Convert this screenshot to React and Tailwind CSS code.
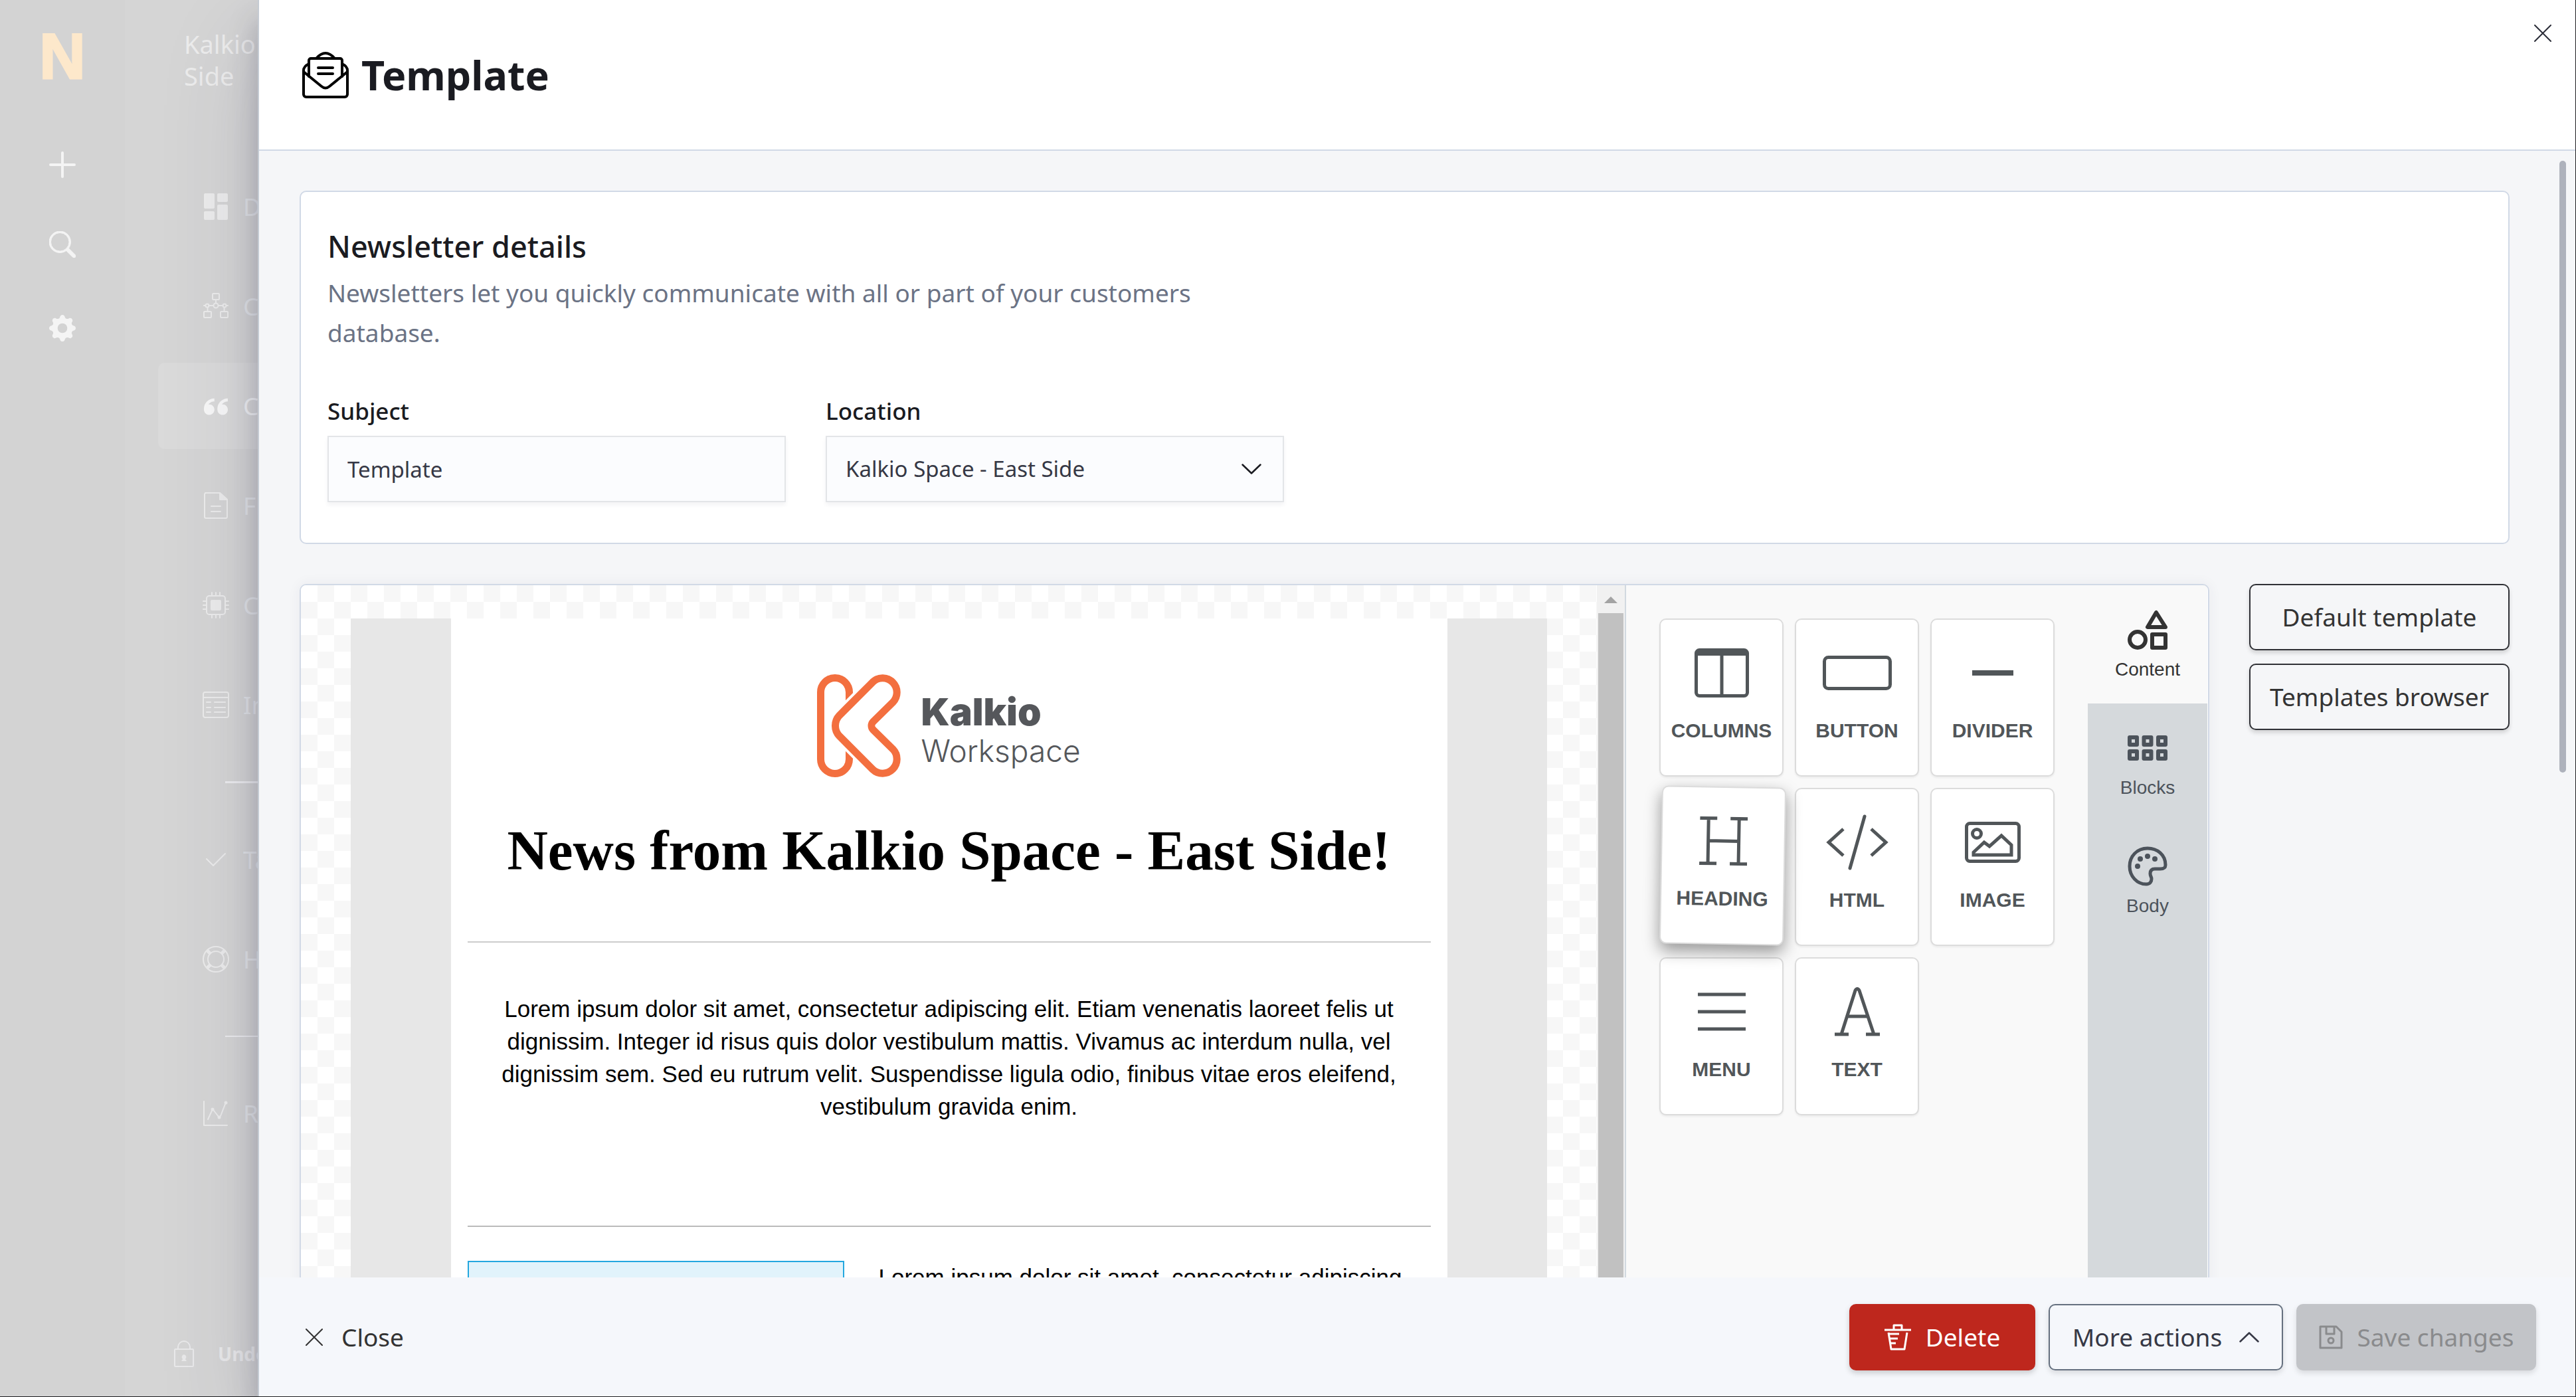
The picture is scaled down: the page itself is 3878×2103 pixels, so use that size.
import { useState } from 'react';
import { BsGearFill, BsSearch } from 'react-icons/bs';
import { ImQuotesLeft } from 'react-icons/im';

const line = { fill: 'none', stroke: 'currentColor', strokeLinecap: 'round', strokeLinejoin: 'round' };

/* Navigation icons, all on a 40px grid */
const navIcons = {
    dashboard: (
        <g fill="currentColor">
            <rect x="2" y="0" width="16" height="23" rx="2" />
            <rect x="2" y="27" width="16" height="13" rx="2" />
            <rect x="22" y="0" width="16" height="13" rx="2" />
            <rect x="22" y="17" width="16" height="23" rx="2" />
        </g>
    ),
    network: (
        <g {...line} strokeWidth="2">
            <rect x="15" y="1" width="10" height="9" rx="1" />
            <path d="M20 10v5M9 19h7M24 19h7M2 19h2M36 19h2M7.500 22v6M32.500 22v6" />
            <circle cx="7" cy="19" r="2.500" />
            <circle cx="20" cy="19" r="3.500" />
            <circle cx="33" cy="19" r="2.500" />
            <rect x="2" y="28" width="11" height="9" rx="1" />
            <rect x="27" y="28" width="11" height="9" rx="1" />
        </g>
    ),
    file: (
        <g {...line} strokeWidth="2">
            <path d="M4 1h22l11 10v26a2 2 0 0 1-2 2H5a2 2 0 0 1-2-2V3z" />
            <path d="M26 1v10h11z" fill="currentColor" />
            <path d="M13 21h14M13 29h14" />
        </g>
    ),
    chip: (
        <g {...line} strokeWidth="2">
            <rect x="6" y="6" width="28" height="28" rx="4" />
            <rect x="13" y="13" width="14" height="14" rx="1" fill="currentColor" />
            <path d="M14 1v4M20 1v4M26 1v4M14 35v4M20 35v4M26 35v4M1 14h4M1 20h4M1 26h4M35 14h4M35 20h4M35 26h4" />
        </g>
    ),
    table: (
        <g {...line} strokeWidth="2">
            <rect x="1" y="1" width="38" height="38" rx="3" />
            <path d="M1 9h38M6 16h6M18 16h16M6 24h6M18 24h16M6 31h6M18 31h16" />
        </g>
    ),
    check: <path {...line} strokeWidth="2" d="M6 19l10 10L34 11" />,
    help: (
        <g {...line} strokeWidth="2">
            <circle cx="20" cy="20" r="19" />
            <circle cx="20" cy="20" r="12" />
            <path strokeWidth="5" strokeLinecap="butt" d="M7 7l5 5M33 7l-5 5M7 33l5-5M33 33l-5-5" />
        </g>
    ),
    chart: (
        <g {...line} strokeWidth="2">
            <path d="M2 2v36h35M8 29l6-13M17 16l7 9M27 24l7-18" />
            <g fill="currentColor" stroke="none">
                <circle cx="15" cy="14" r="2.500" />
                <circle cx="25" cy="26" r="2.500" />
                <circle cx="35" cy="4" r="2.500" />
            </g>
        </g>
    ),
};

const mainNav = [
    { label: 'Dashboard', icon: 'dashboard' },
    { label: 'Company', icon: 'network' },
    { label: 'Content', icon: 'quote', active: true },
    { label: 'Files', icon: 'file' },
    { label: 'Connect', icon: 'chip' },
    { label: 'Inventory', icon: 'table' },
];

const supportNav = [
    { label: 'Tasks', icon: 'check' },
    { label: 'Helpdesk', icon: 'help' },
];

/* Block icons for the content tools */
const blocks = [
    {
        label: 'Columns',
        icon: (
            <svg viewBox="0 0 82 74" className="h-[74px] w-[82px]">
                <rect {...line} x="2.500" y="2.500" width="77" height="69" rx="5" strokeWidth="5" />
                <path {...line} d="M41 6v64" strokeWidth="5" />
                <rect x="3" y="3" width="76" height="8" fill="currentColor" />
            </svg>
        ),
    },
    {
        label: 'Button',
        icon: (
            <svg viewBox="0 0 104 52" className="h-[52px] w-[104px]">
                <rect {...line} x="2.500" y="2.500" width="99" height="47" rx="6" strokeWidth="5" />
            </svg>
        ),
    },
    {
        label: 'Divider',
        icon: (
            <svg viewBox="0 0 62 8" className="h-[8px] w-[62px]">
                <rect width="62" height="8" fill="currentColor" />
            </svg>
        ),
    },
    {
        label: 'Heading',
        lifted: true,
        icon: (
            <svg viewBox="0 0 72 74" className="h-[74px] w-[72px]">
                <path {...line} strokeLinecap="butt" strokeWidth="5" d="M0 3h26M46 3h26M0 71h26M46 71h26M13 3v68M59 3v68M13 37h46" />
            </svg>
        ),
    },
    {
        label: 'HTML',
        icon: (
            <svg viewBox="0 0 94 84" className="h-[84px] w-[94px]">
                <path {...line} strokeLinecap="butt" strokeLinejoin="miter" strokeWidth="5" d="M26 22L4 42l22 20M68 22l22 20-22 20" />
                <path {...line} strokeWidth="5" d="M58 3L36 81" />
            </svg>
        ),
    },
    {
        label: 'Image',
        icon: (
            <svg viewBox="0 0 84 62" className="h-[62px] w-[84px]">
                <g {...line} strokeWidth="5" strokeLinejoin="miter">
                    <rect x="2.500" y="2.500" width="79" height="57" rx="5" />
                    <circle cx="18" cy="18" r="6.500" />
                    <path d="M13 50v-4l16-15 8 6 18-16 15 14v15z" />
                </g>
            </svg>
        ),
    },
    {
        label: 'Menu',
        icon: (
            <svg viewBox="0 0 72 58" className="h-[58px] w-[72px]">
                <path {...line} strokeLinecap="butt" strokeWidth="5" d="M0 3h72M0 29h72M0 55h72" />
            </svg>
        ),
    },
    {
        label: 'Text',
        icon: (
            <svg viewBox="0 0 68 74" className="h-[74px] w-[68px]">
                <path {...line} strokeLinecap="butt" strokeWidth="5" d="M0 71h21M47 71h21M10 71L31 5q3-5 6 0l22 66M18 44h32" />
            </svg>
        ),
    },
];

const editorTabs = [
    {
        label: 'Content',
        icon: (
            <g {...line} strokeWidth="6">
                <path d="M43 4L30 26h27z" />
                <circle cx="15" cy="45" r="12" />
                <rect x="37" y="37" width="20" height="20" />
            </g>
        ),
    },
    {
        label: 'Blocks',
        icon: (
            <g {...line} strokeWidth="6">
                <rect x="3" y="14" width="11" height="11" />
                <rect x="24.500" y="14" width="11" height="11" />
                <rect x="46" y="14" width="11" height="11" />
                <rect x="3" y="35" width="11" height="11" />
                <rect x="24.500" y="35" width="11" height="11" />
                <rect x="46" y="35" width="11" height="11" />
            </g>
        ),
    },
    {
        label: 'Body',
        icon: (
            <>
                <path {...line} strokeWidth="5" d="M30 3C14 3 3 15 3 30c0 15 11 27 25 27 6 0 8-4 8-8 0-3-2-4-2-8 0-5 3-7 7-7h8c5 0 8-1 8-6C57 13 45 3 30 3z" />
                <g fill="currentColor">
                    <circle cx="15" cy="30" r="4" />
                    <circle cx="19" cy="19" r="4" />
                    <circle cx="30" cy="15" r="4" />
                    <circle cx="41" cy="19" r="4" />
                </g>
            </>
        ),
    },
];

function CloseIcon() {
    return (
        <svg viewBox="0 0 26 26" className="h-[26px] w-[26px]">
            <path {...line} strokeWidth="2" d="M1 1l24 24M25 1L1 25" />
        </svg>
    );
}

function NavItem({ label, icon, active }) {
    return (
        <a
            href="#"
            className={`flex h-[130px] items-center gap-[21px] rounded-l-[10px] pl-[67px] text-[37px] ${active ? 'bg-[#dadada] text-[#f3f4f5]' : 'text-[#e4e6e8]'}`}
        >
            {icon === 'quote' ? (
                <ImQuotesLeft className="h-[36px] w-10 shrink-0 text-[#f8f8f8]" />
            ) : (
                <svg viewBox="0 0 40 40" className="size-10 shrink-0 text-[#ececec]">{navIcons[icon]}</svg>
            )}
            <span className="min-w-0 overflow-hidden">{label}</span>
        </a>
    );
}

function Sidebar() {
    return (
        <aside className="flex w-[388px] shrink-0 bg-[#d5d5d5]">
            {/* Icon rail */}
            <div className="flex w-[188px] shrink-0 flex-col items-center bg-[#d3d3d3] pt-[35px] text-[#f4f4f4]">
                <span className="font-['Liberation_Sans',sans-serif] text-[96px] leading-[100px] font-bold text-[#fde8cb] [-webkit-text-stroke:3px_#fde8cb]">N</span>
                <button type="button" aria-label="Add" className="mt-[93px]">
                    <svg viewBox="0 0 40 40" className="size-10">
                        <path {...line} strokeWidth="4" d="M20 2v36M2 20h36" />
                    </svg>
                </button>
                <button type="button" aria-label="Search" className="mt-20">
                    <BsSearch className="size-10" strokeWidth="0.4" />
                </button>
                <button type="button" aria-label="Settings" className="mt-[86px]">
                    <BsGearFill className="size-10" />
                </button>
            </div>

            {/* Menu */}
            <nav className="flex min-w-0 flex-1 flex-col pt-[42px] pl-[50px]">
                <p className="h-[204px] overflow-hidden pl-[39px] text-[38px] leading-[48px] whitespace-nowrap text-[#ececec]">
                    Kalkio Space - East
                    <br />
                    Side
                </p>
                <div className="flex flex-col gap-5">
                    {mainNav.map((item) => <NavItem key={item.label} {...item} />)}
                </div>
                <hr className="my-[50px] ml-[101px] border-t-[3px] border-[#eeeef0]" />
                <div className="flex flex-col gap-5">
                    {supportNav.map((item) => <NavItem key={item.label} {...item} />)}
                </div>
                <hr className="my-[50px] ml-[101px] border-t-2 border-[#eeeef0]" />
                <NavItem label="Reports" icon="chart" />
                <button type="button" className="mt-auto mb-[44px] flex items-center gap-[36px] pl-6 text-[28px] leading-10 font-bold text-[#e9e9ea]">
                    <svg viewBox="0 0 30 40" className="h-10 w-[30px] shrink-0">
                        <rect {...line} strokeWidth="2" x="1" y="13" width="28" height="26" rx="1" />
                        <path {...line} strokeWidth="2" d="M6 13v-3a9 9 0 0 1 18 0v3" />
                        <path fill="currentColor" d="M15 21a4 4 0 0 1 2 7l2 3h-8l2-3a4 4 0 0 1 2-7z" />
                    </svg>
                    <span className="min-w-0 overflow-hidden">Undock</span>
                </button>
            </nav>
        </aside>
    );
}

function DetailsCard() {
    return (
        <section className="rounded-[10px] border-2 border-[#d1d9e6] bg-white px-10 pt-[52px] pb-[61px]">
            <h2 className="text-[45px] leading-[60px] font-medium text-[#1a1b21]">Newsletter details</h2>
            <p className="mt-[10px] max-w-[1400px] text-[37px] leading-[60px] text-[#6b7385]">
                Newsletters let you quickly communicate with all or part of your customers database.
            </p>
            <div className="mt-[63px] flex gap-[60px]">
                <div className="w-[690px]">
                    <label htmlFor="subject" className="block text-[35px] leading-[50px] font-medium text-[#1a1b21]">Subject</label>
                    <input
                        id="subject"
                        type="text"
                        defaultValue="Template"
                        className="mt-3 h-[100px] w-full border-2 border-[#e3e5e8] bg-[#fbfcfe] px-7 text-[33px] text-[#363845] shadow-[0_4px_6px_rgba(50,50,93,0.06)]"
                    />
                </div>
                <div className="w-[690px]">
                    <label htmlFor="location" className="block text-[35px] leading-[50px] font-medium text-[#1a1b21]">Location</label>
                    <div className="relative mt-3">
                        <select
                            id="location"
                            className="h-[100px] w-full appearance-none border-2 border-[#e3e5e8] bg-[#fbfcfe] px-7 text-[33px] text-[#363845] shadow-[0_4px_6px_rgba(50,50,93,0.06)]"
                        >
                            <option>Kalkio Space - East Side</option>
                        </select>
                        <svg viewBox="0 0 30 16" className="pointer-events-none absolute top-[42px] right-[34px] h-4 w-[30px] text-[#1a1b21]">
                            <path {...line} strokeWidth="2.5" d="M1.500 1.500L15 14.500l13.500-13" />
                        </svg>
                    </div>
                </div>
            </div>
        </section>
    );
}

function KalkioLogo() {
    return (
        <div className="flex justify-center gap-[30px]">
            <svg viewBox="0 0 126 155" className="h-[155px] w-[126px]" fill="none" stroke="#f36f3f" strokeWidth="11">
                <path d="M48.500 46V27a21.500 21.500 0 0 0-43 0v101a21.500 21.500 0 0 0 43 0v-19" />
                <path
                    stroke="#fff"
                    strokeWidth="19"
                    d="M83.800 11.800L33.600 62a22.700 22.700 0 0 0 0 31l50.200 50.200"
                />
                <path d="M83.800 11.800A21.500 21.500 0 0 1 114.200 42.200L84.500 71.400a8.700 8.700 0 0 0 0 12.200l29.700 29.200A21.500 21.500 0 0 1 83.800 143.200L33.600 93a22.700 22.700 0 0 1 0-31z" />
            </svg>
            <div className="pt-7 font-['Inter',sans-serif] leading-[58px] text-[#55575b]">
                <p className="text-[57px] font-black">Kalkio</p>
                <p className="text-[46px] font-light">Workspace</p>
            </div>
        </div>
    );
}

function EmailCanvas() {
    return (
        <div className="flex min-w-0 flex-1">
            <div className="flex-1 bg-[repeating-conic-gradient(#f7f7f7_0_25%,#fff_0_50%)] bg-[length:50px_50px] px-[75px] pt-[50px]">
                <div className="h-full bg-[#e7e7e7]">
                    <div className="mx-auto h-full max-w-[1500px] bg-white px-[25px] pt-[84px] font-['Liberation_Sans',sans-serif] text-[35px] leading-[49px] text-black">
                        <KalkioLogo />
                        <h1 className="mt-[54px] text-center font-['Liberation_Serif',serif] text-[85px] leading-[112px] font-bold whitespace-nowrap">
                            News from Kalkio Space - East Side!
                        </h1>
                        <hr className="mt-[81px] border-t-2 border-[#ccc]" />
                        <p className="mt-[75px] px-[25px] text-center">
                            Lorem ipsum dolor sit amet, consectetur adipiscing elit. Etiam venenatis laoreet felis ut
                            dignissim. Integer id risus quis dolor vestibulum mattis. Vivamus ac interdum nulla, vel
                            dignissim sem. Sed eu rutrum velit. Suspendisse ligula odio, finibus vitae eros eleifend,
                            vestibulum gravida enim.
                        </p>
                        <hr className="mt-[155px] border-t-2 border-[#bbb]" />
                        <div className="mt-[51px] flex gap-[52px]">
                            <div className="h-[400px] w-[567px] shrink-0 border-2 border-[#24a7df] bg-[#e1f3fb]" />
                            <p className="pr-5">
                                Lorem ipsum dolor sit amet, consectetur adipiscing elit. Etiam venenatis laoreet felis
                                ut dignissim. Integer id risus quis dolor vestibulum mattis.
                            </p>
                        </div>
                    </div>
                </div>
            </div>

            {/* Canvas scrollbar */}
            <div className="flex w-[42px] flex-col items-center bg-[#f1f1f1] pt-[17px]">
                <svg viewBox="0 0 20 10" className="h-[10px] w-5 shrink-0">
                    <path d="M10 0l10 10H0z" fill="#a3a3a3" />
                </svg>
                <div className="mt-[15px] w-[38px] flex-1 bg-[#c1c1c1]" />
            </div>
        </div>
    );
}

function EditorTools() {
    const [tab, setTab] = useState('Content');

    return (
        <div className="flex shrink-0 border-l-2 border-[#d1d9e0] bg-[#f9f9f9] font-['Liberation_Sans',sans-serif]">
            <div className="grid grid-cols-3 content-start gap-[17px] p-[50px]">
                {blocks.map(({ label, icon, lifted }) => (
                    <button
                        key={label}
                        type="button"
                        className={`flex h-[238px] w-[187px] flex-col items-center rounded-[10px] border-2 border-[#dcdcdc] bg-white pt-[30px] text-[#515659] ${lifted ? 'relative translate-x-0.5 -translate-y-0.5 rotate-1 shadow-[0_10px_25px_rgba(0,0,0,0.4)]' : 'shadow-[0_2px_3px_rgba(0,0,0,0.06)]'}`}
                    >
                        <span className="flex h-[100px] items-center">{icon}</span>
                        <span className="mt-[17px] text-[30px] leading-10 font-bold uppercase">{label}</span>
                    </button>
                ))}
            </div>
            <div className="w-[181px] border-r border-white bg-[#d5d9dc]">
                {editorTabs.map(({ label, icon }) => (
                    <button
                        key={label}
                        type="button"
                        onClick={() => setTab(label)}
                        className={`flex h-[178px] w-full flex-col items-center pt-[37px] text-[28px] leading-8 ${tab === label ? 'bg-[#f9f9f9] text-[#333]' : 'text-[#4c535b]'}`}
                    >
                        <svg viewBox="0 0 60 60" className="size-[60px]">{icon}</svg>
                        <span className="mt-[14px]">{label}</span>
                    </button>
                ))}
            </div>
        </div>
    );
}

export default function App() {
    return (
        <div className="flex h-screen overflow-hidden border-r border-b border-[#1f1f22] bg-[#d5d5d5] font-['Noto_Sans','Open_Sans',sans-serif]">
            <Sidebar />

            <main className="z-10 flex min-w-0 flex-1 flex-col border-l-2 border-[#c5cbd3] bg-[#f5f6f8] shadow-[0_60px_140px_rgba(50,50,80,0.16),0_30px_40px_rgba(50,50,80,0.28)]">
                {/* Header */}
                <header className="flex h-[227px] shrink-0 items-start justify-between border-b-2 border-[#d1d9e6] bg-white pr-[36px] pl-[65px]">
                    <div className="flex h-full items-center gap-[19px]">
                        <svg viewBox="0 0 70 70" className="size-[70px] text-black">
                            <g {...line} strokeWidth="4">
                                <path d="M10 18Q2 22 2 28v36a4 4 0 0 0 4 4h58a4 4 0 0 0 4-4V28q0-6-8-10" />
                                <path d="M10 37V13a3 3 0 0 1 3-3h44a3 3 0 0 1 3 3v24" />
                                <path d="M21 10q7-8 14-8t14 8M2 30l27 22q6 5 12 0l27-22M24 24h22M24 33h22" />
                            </g>
                        </svg>
                        <h1 className="text-[61px] leading-[80px] font-bold text-[#1a1b21]">Template</h1>
                    </div>
                    <button type="button" aria-label="Close panel" className="mt-[37px] text-[#2b2d38]">
                        <CloseIcon />
                    </button>
                </header>

                {/* Body */}
                <div className="relative min-h-0 flex-1 overflow-hidden pt-[60px] pr-[99px] pl-[61px]">
                    <DetailsCard />
                    <div className="mt-[60px] flex items-start gap-[60px]">
                        <section className="flex h-[1500px] min-w-0 flex-1 overflow-hidden rounded-[10px] border-2 border-[#d1d9e6] bg-white shadow-[0_0_20px_rgba(50,50,93,0.06)]">
                            <EmailCanvas />
                            <EditorTools />
                        </section>
                        <div className="flex w-[392px] shrink-0 flex-col gap-5 text-[37px] text-[#333]">
                            <button type="button" className="h-[100px] rounded-[10px] border-2 border-[#303136] shadow-[0_4px_6px_rgba(0,0,0,0.15)]">
                                Default template
                            </button>
                            <button type="button" className="h-[100px] rounded-[10px] border-2 border-[#303136] shadow-[0_4px_6px_rgba(0,0,0,0.15)]">
                                Templates browser
                            </button>
                        </div>
                    </div>
                    <div className="absolute top-[15px] right-[14px] h-[921px] w-[10px] rounded-full bg-[#aeb2bc]" />
                </div>

                {/* Footer */}
                <footer className="flex shrink-0 items-center gap-5 bg-[#f5f7fb] pt-10 pr-[59px] pb-[39px] pl-[70px] text-[37px]">
                    <button type="button" className="mr-auto flex h-[100px] items-center gap-7 text-[#333]">
                        <CloseIcon />
                        Close
                    </button>
                    <button type="button" className="flex h-[100px] w-[280px] items-center justify-center gap-[22px] rounded-[10px] bg-[#be271d] text-white shadow-[0_4px_8px_rgba(0,0,0,0.18)]">
                        <svg viewBox="0 0 40 40" className="size-10">
                            <path {...line} strokeWidth="3" strokeLinecap="butt" d="M0 9h40M14 8V2h12v6M6 13l4 25h20l4-25M6 15h16M8 22h12M9 29h8" />
                        </svg>
                        Delete
                    </button>
                    <button type="button" className="flex h-[100px] w-[353px] items-center justify-center gap-[26px] rounded-[10px] border-2 border-[#65707f] text-[#363845] shadow-[0_4px_8px_rgba(0,0,0,0.12)]">
                        More actions
                        <svg viewBox="0 0 30 16" className="h-4 w-[30px]">
                            <path {...line} strokeWidth="2.5" d="M1.500 14.500L15 1.500l13.500 13" />
                        </svg>
                    </button>
                    <button type="button" disabled className="flex h-[100px] w-[361px] items-center justify-center gap-[22px] rounded-[10px] bg-[#c2c4c8] text-[#8a8b8d] shadow-[0_4px_8px_rgba(0,0,0,0.12)]">
                        <svg viewBox="0 0 36 36" className="size-9">
                            <path {...line} strokeWidth="3" d="M2 2h24l8 8v24H2zM11 2v11h12V2" />
                            <circle {...line} strokeWidth="3" cx="18" cy="23" r="4" />
                        </svg>
                        Save changes
                    </button>
                </footer>
            </main>
        </div>
    );
}
